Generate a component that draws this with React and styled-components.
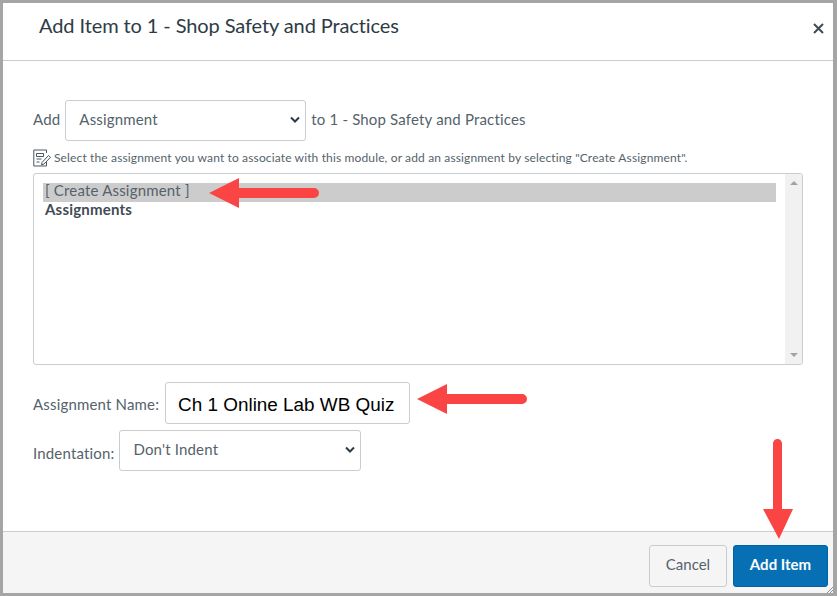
import React from 'react';
import styled, { createGlobalStyle } from 'styled-components';

const GlobalStyle = createGlobalStyle`
  html, body {
    margin: 0;
    padding: 0;
    background: #fff;
  }
`;

const TEXT = '#55626b';

const Frame = styled.div`
  position: relative;
  box-sizing: border-box;
  width: 837px;
  height: 596px;
  display: flex;
  flex-direction: column;
  border: solid #a5a5a5;
  border-width: 3px 4px 3px 3px;
  background: #fff;
  font-family: Lato, "Open Sans", sans-serif;
  color: ${TEXT};
  overflow: hidden;
`;

const Header = styled.header`
  box-sizing: border-box;
  flex: none;
  height: 58px;
  display: flex;
  align-items: flex-start;
  justify-content: space-between;
  padding: 10px 9px 0 36px;
  border-bottom: 1px solid #c7cdd1;
`;

const Title = styled.h1`
  margin: 0;
  font-size: 20px;
  line-height: 25px;
  font-weight: 400;
  letter-spacing: -0.1px;
  color: #2d3b45;
`;

const CloseIcon = styled.svg`
  width: 11px;
  height: 11px;
  margin-top: 10px;
  color: #3f4b54;
`;

const Body = styled.main`
  flex: 1;
  min-height: 0;
  padding: 39px 30px 0 30px;
`;

const Row = styled.div`
  display: flex;
  align-items: center;
  gap: ${p => p.$gap}px;
  font-size: 15px;
  letter-spacing: 0.17px;
`;

const PickerWrap = styled.div`
  position: relative;
  flex: none;
  width: ${p => p.$width}px;
  height: 41px;
`;

const Picker = styled.select`
  box-sizing: border-box;
  width: 100%;
  height: 100%;
  padding: 0 20px 3px 13px;
  appearance: none;
  border: 1px solid #c7cdd1;
  border-radius: 3px;
  background: #fff;
  color: ${TEXT};
  font: 400 15px Lato, sans-serif;
  letter-spacing: 0.17px;
`;

const Caret = styled.svg`
  position: absolute;
  right: 6px;
  top: 16px;
  width: 10px;
  height: 7px;
  color: #2f3a42;
  pointer-events: none;
`;

const RowText = styled.span`
  margin-bottom: 3px;
`;

const Hint = styled.div`
  display: flex;
  align-items: center;
  gap: 3px;
  height: 18px;
  margin-top: 8px;
  font-size: 12px;
  line-height: 16px;
  letter-spacing: 0.14px;
`;

const HintIcon = styled.svg`
  flex: none;
  width: 18px;
  height: 18px;
  color: #4a565f;
`;

const ListBox = styled.div`
  box-sizing: border-box;
  height: 192px;
  margin-top: 6px;
  display: flex;
  justify-content: space-between;
  border: 1px solid #c7cdd1;
  border-radius: 3px;
  overflow: hidden;
`;

const Options = styled.div`
  flex: 1;
  padding: 9px 9px 0 9px;
  font-size: 15px;
  letter-spacing: 0.19px;
`;

const Option = styled.div`
  padding-left: 2px;
  height: 19px;
  line-height: 14px;
  background: ${p => (p.$selected ? '#cccccc' : 'transparent')};
  font-weight: ${p => (p.$group ? 700 : 400)};
  color: ${p => (p.$group ? '#3f4b54' : TEXT)};
`;

const ScrollTrack = styled.div`
  flex: none;
  width: 17px;
  display: flex;
  flex-direction: column;
  justify-content: space-between;
  align-items: center;
  padding: 7px 0;
  background: #f1f1f1;
`;

const ScrollArrow = styled.span`
  width: 0;
  height: 0;
  border-left: 4px solid transparent;
  border-right: 4px solid transparent;
  border-${p => (p.$down ? 'top' : 'bottom')}: 4px solid #a3a3a3;
`;

const NameRow = styled(Row)`
  margin-top: 17px;
`;

const IndentRow = styled(Row)`
  margin-top: 6px;
`;

const FieldLabel = styled.label`
  position: relative;
  top: ${p => p.$drop || 0}px;
`;

const NameInput = styled.input`
  box-sizing: border-box;
  width: 245px;
  height: 42px;
  padding: 3px 12px 0;
  border: 1px solid #c7cdd1;
  border-radius: 3px;
  color: #000;
  font: 400 18.9px "Liberation Sans", Arial, sans-serif;
`;

const Footer = styled.footer`
  box-sizing: border-box;
  flex: none;
  height: 62px;
  display: flex;
  justify-content: flex-end;
  gap: 6px;
  padding: 13px 5px 0 0;
  background: #f5f5f5;
  border-top: 1px solid #c7cdd1;
`;

const Button = styled.button`
  box-sizing: border-box;
  width: ${p => p.$width}px;
  height: 42px;
  padding: 0 0 5px;
  border: 1px solid ${p => (p.$primary ? '#0062a3' : '#c7cdd1')};
  border-radius: 3px;
  background: ${p => (p.$primary ? '#0770b5' : '#f5f5f5')};
  color: ${p => (p.$primary ? '#fff' : TEXT)};
  font: ${p => (p.$primary ? 700 : 400)} 15px Lato, sans-serif;
`;

const Grip = styled.svg`
  position: absolute;
  right: 0;
  bottom: 0;
  width: 6px;
  height: 6px;
  color: #8c8c8c;
`;

const Arrow = styled.svg`
  position: absolute;
  left: ${p => p.$x}px;
  top: ${p => p.$y}px;
  width: ${p => p.$w}px;
  height: ${p => p.$h}px;
  color: #fb4444;
`;

function LeftArrow({ x, y, length }) {
  // tip sits at the left, shaft rounds off at the right
  return (
    <Arrow $x={x} $y={y} $w={length} $h={30} viewBox={`0 0 ${length} 30`} fill="currentColor">
      <path d={`M0 15 L30 0 V10 H${length - 5} a5 5 0 0 1 0 10 H30 V30 Z`} />
    </Arrow>
  );
}

function SelectBox({ width, value }) {
  return (
    <PickerWrap $width={width}>
      <Picker defaultValue={value}>
        <option>{value}</option>
      </Picker>
      <Caret viewBox="0 0 10 7" fill="none" stroke="currentColor" strokeWidth="2">
        <path d="M1 1.5 L5 5.5 L9 1.5" />
      </Caret>
    </PickerWrap>
  );
}

export default function App() {
  return (
    <Frame>
      <GlobalStyle />
      <Header>
        <Title>Add Item to 1 - Shop Safety and Practices</Title>
        <CloseIcon viewBox="0 0 11 11" fill="none" stroke="currentColor" strokeWidth="2">
          <path d="M1 1 L10 10 M10 1 L1 10" />
        </CloseIcon>
      </Header>
      <Body>
        <Row $gap={5}>
          <RowText>Add</RowText>
          <SelectBox width={241} value="Assignment" />
          <RowText>to 1 - Shop Safety and Practices</RowText>
        </Row>
        <Hint>
          <HintIcon viewBox="0 0 18 18" fill="none" stroke="currentColor" strokeWidth="1">
            <path d="M13.5 4 V1 H0.8 V17 H13.5 V13" />
            <path d="M3.5 4.5 H10.5 V7.5 H3.5 Z M3.5 10 H8.5 M3.5 13 H6.5" />
            <path d="M9 13.5 L15.5 6.5 L17.5 8.3 L11 15 L8.5 15.8 Z" />
          </HintIcon>
          <span>Select the assignment you want to associate with this module, or add an assignment by selecting "Create Assignment".</span>
        </Hint>
        <ListBox>
          <Options>
            <Option $selected>[ Create Assignment ]</Option>
            <Option $group>Assignments</Option>
          </Options>
          <ScrollTrack>
            <ScrollArrow />
            <ScrollArrow $down />
          </ScrollTrack>
        </ListBox>
        <NameRow $gap={6}>
          <FieldLabel $drop={1}>Assignment Name:</FieldLabel>
          <NameInput defaultValue="Ch 1 Online Lab WB Quiz" />
        </NameRow>
        <IndentRow $gap={5}>
          <FieldLabel $drop={2}>Indentation:</FieldLabel>
          <SelectBox width={242} value="Don't Indent" />
        </IndentRow>
      </Body>
      <Footer>
        <Button $width={78}>Cancel</Button>
        <Button $width={95} $primary>Add Item</Button>
      </Footer>
      <Grip viewBox="0 0 6 6" fill="none" stroke="currentColor" strokeWidth="1">
        <path d="M0 6 L6 0 M3 6 L6 3" />
      </Grip>
      <LeftArrow x={206} y={175} length={110} />
      <LeftArrow x={414} y={381} length={110} />
      <Arrow $x={760} $y={436} $w={30} $h={100} viewBox="0 0 30 100" fill="currentColor">
        <path d="M16 100 L0 70 H10 V4.5 a4.5 4.5 0 0 1 9 0 V70 H30 Z" />
      </Arrow>
    </Frame>
  );
}
